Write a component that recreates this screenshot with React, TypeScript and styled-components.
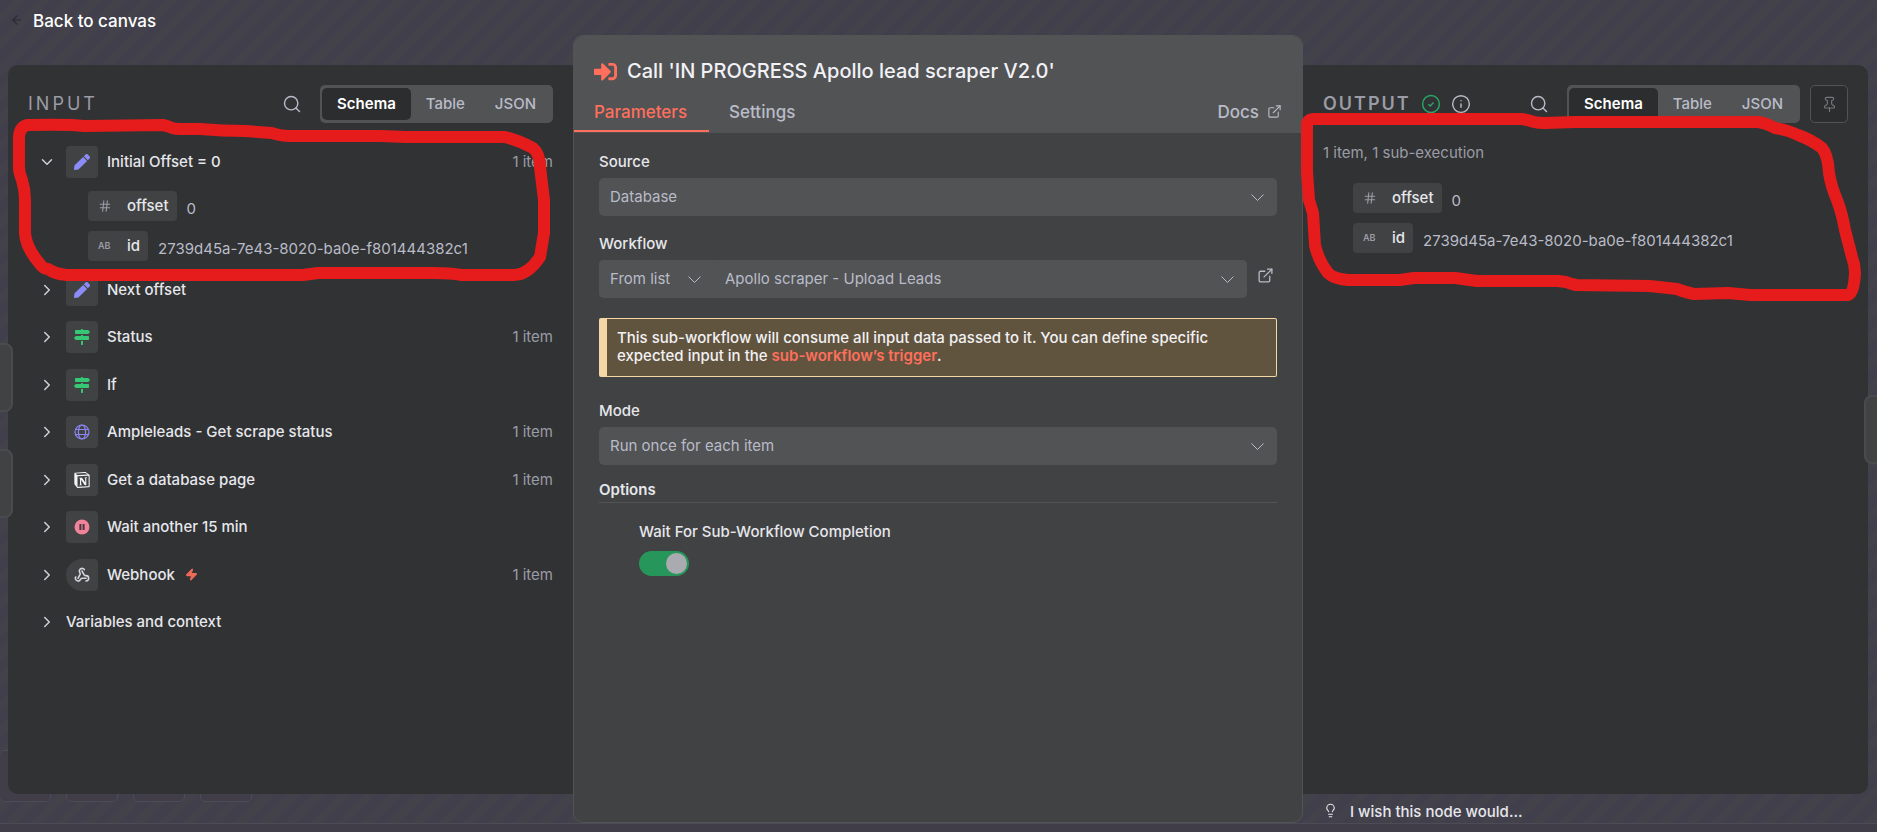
import React from "react";
import styled, { createGlobalStyle, css } from "styled-components";
import { ArrowLeft, ChevronDown, ChevronRight, ExternalLink, Hash, Info, Lightbulb, Pin, Search, Webhook, Zap } from "lucide-react";
import { FaPen, FaMapSigns, FaSignInAlt } from "react-icons/fa";
import { SiNotion } from "react-icons/si";

const color = {
  panel: "#313233",
  surface: "#414243",
  raised: "#525355",
  sunken: "#2c2d2e",
  text: "#e6e7ec",
  soft: "#b9bcc8",
  muted: "#9a9ca6",
  accent: "#ff6f5c",
  green: "#27965a",
  mark: "#e61c1c",
};

const GlobalStyle = createGlobalStyle`
  *, *::before, *::after { box-sizing: border-box; }
  body {
    margin: 0;
    background: #403e49;
    color: ${color.text};
    font-family: Inter, "Liberation Sans", sans-serif;
    font-size: 15px;
    line-height: 18px;
  }
  button, select, input { font: inherit; color: inherit; margin: 0; }
  button { background: none; border: 0; padding: 0; cursor: pointer; }
  svg { display: block; flex: none; }
`;

const Page = styled.div`
  position: relative;
  min-height: 100vh;
  display: flex;
  flex-direction: column;
  overflow: hidden;
  background: repeating-linear-gradient(135deg, #423f4c 0 9px, #434149 9px 18px);
`;

const TopBar = styled.header`
  height: 35px;
  padding: 8px 10px 0;
  display: flex;
  align-items: center;
`;

const BackLink = styled.a`
  display: flex;
  align-items: center;
  gap: 9px;
  color: #ffffff;
  font-size: 17px;
  line-height: 27px;
  font-weight: 500;
  text-decoration: none;
  svg { color: #2b2a30; margin-bottom: 4px; }
`;

const Editor = styled.main`
  position: relative;
  flex: 1;
  display: grid;
  grid-template-columns: 565fr 730fr 565fr;
  padding: 0 9px 0 8px;
`;

const StatusStrip = styled.footer`
  height: 9px;
  border-top: 1px solid #4d4b56;
  background: #403d48;
`;

const Side = styled.div`
  position: relative;
  min-width: 0;
  display: flex;
  flex-direction: column;
  padding-top: 30px;
`;

const Panel = styled.section<{ $side: "left" | "right" }>`
  position: relative;
  flex: 1;
  background: ${color.panel};
  border-radius: ${(p) => (p.$side === "left" ? "10px 0 0 10px" : "0 10px 10px 0")};
  padding: 20px 20px 0;
`;

const BelowPanel = styled.div`
  height: 29px;
  padding: 7px 20px 0;
`;

const Wish = styled.a`
  display: flex;
  align-items: center;
  gap: 12px;
  color: ${color.text};
  font-weight: 500;
  line-height: 22px;
  text-decoration: none;
  svg { margin-bottom: 4px; }
`;

const PanelHeader = styled.div`
  display: flex;
  align-items: center;
  height: 38px;
`;

const PanelTitle = styled.h2<{ $strong?: boolean }>`
  margin: 0;
  font-size: 18px;
  line-height: 38px;
  font-weight: ${(p) => (p.$strong ? 600 : 400)};
  letter-spacing: ${(p) => (p.$strong ? 2 : 3)}px;
  color: ${color.muted};
`;

const Badges = styled.div`
  display: flex;
  align-items: center;
  gap: 10px;
  margin-left: 10px;
  color: ${color.soft};
`;

const SearchButton = styled.button`
  margin: 0 18px 0 auto;
  color: ${color.soft};
`;

const ViewTabs = styled.div`
  display: flex;
  height: 38px;
  padding: 3px 2px;
  border-radius: 5px;
  background: ${color.raised};
`;

const ViewTab = styled.button<{ $active?: boolean }>`
  padding: 0 15px;
  border-radius: 5px;
  font-weight: 500;
  color: ${color.soft};
  ${(p) => p.$active && css`
    background: ${color.sunken};
    color: #ffffff;
    font-weight: 600;
  `}
`;

const PinButton = styled.button`
  width: 38px;
  height: 38px;
  margin-left: 10px;
  display: grid;
  place-items: center;
  border: 1px solid ${color.raised};
  border-radius: 5px;
  background: ${color.sunken};
  color: #77787b;
`;

const NodeRow = styled.button`
  width: 100%;
  min-height: 32px;
  padding-left: 10px;
  display: flex;
  align-items: center;
  font-weight: 500;
  text-align: left;
  > svg { color: #cfd1da; }
`;

const NodeIcon = styled.span<{ $round?: boolean }>`
  width: 32px;
  height: 32px;
  margin: 0 9px 0 10px;
  display: grid;
  place-items: center;
  border-radius: ${(p) => (p.$round ? "16px 4px 4px 16px" : "4px")};
  background: ${color.surface};
`;

const NodeName = styled.span<{ $bare?: boolean }>`
  display: flex;
  align-items: center;
  gap: 10px;
  margin-left: ${(p) => (p.$bare ? 10 : 0)}px;
`;

const ItemCount = styled.span`
  margin-left: auto;
  font-weight: 400;
  color: ${color.muted};
`;

const OpenNode = styled.div`
  padding-top: 23px;
`;

const Fields = styled.dl<{ $top: number; $left: number }>`
  margin: ${(p) => p.$top}px 0 0 ${(p) => p.$left}px;
  display: grid;
  gap: 10px;
`;

const Field = styled.div`
  display: flex;
  align-items: center;
`;

const FieldName = styled.dt`
  height: 30px;
  padding: 0 8px 0 10px;
  display: flex;
  align-items: center;
  border-radius: 4px;
  background: ${color.surface};
  font-weight: 500;
`;

const FieldType = styled.span`
  width: 29px;
  font-size: 9px;
  font-weight: 600;
  color: ${color.muted};
`;

const FieldValue = styled.dd`
  margin: 0 0 0 10px;
  padding-top: 6px;
  color: ${color.soft};
`;

const NodeList = styled.div`
  min-height: 380px;
  margin-top: 5px;
  display: grid;
  grid-auto-rows: 1fr;
`;

const RunSummary = styled.p`
  margin: 21px 0 0;
  color: ${color.muted};
`;

const Dialog = styled.section`
  min-width: 0;
  border: 1px solid ${color.raised};
  border-radius: 10px;
  background: ${color.surface};
  overflow: hidden;
`;

const DialogHeader = styled.div`
  height: 97px;
  padding-top: 17px;
  background: ${color.raised};
  display: flex;
  flex-direction: column;
  justify-content: space-between;
`;

const DialogTitle = styled.h1`
  margin: 0;
  padding: 0 20px;
  display: flex;
  align-items: center;
  gap: 10px;
  font-size: 20px;
  line-height: 36px;
  font-weight: 500;
  color: #f1f1f6;
  svg { color: ${color.accent}; }
`;

const DialogTabs = styled.nav`
  display: flex;
  height: 41px;
  padding-right: 20px;
  font-size: 17px;
`;

const DialogTab = styled.button<{ $active?: boolean }>`
  height: 40px;
  padding: 2px 22px 0 20px;
  font-weight: 500;
  color: ${(p) => (p.$active ? color.accent : color.soft)};
  border-bottom: 2px solid ${(p) => (p.$active ? color.accent : "transparent")};
`;

const DocsLink = styled.a`
  margin-left: auto;
  display: flex;
  align-items: center;
  gap: 8px;
  height: 40px;
  font-weight: 500;
  color: ${color.soft};
  text-decoration: none;
  svg { margin-bottom: 2px; }
`;

const Form = styled.form`
  padding: 18px 25px;
`;

const Group = styled.div<{ $gap: number }>`
  margin-top: ${(p) => p.$gap}px;
`;

const Label = styled.label`
  display: block;
  line-height: 22px;
  margin-bottom: 5px;
  font-weight: 500;
`;

const SelectBox = styled.span<{ $grow?: boolean }>`
  display: grid;
  align-items: center;
  flex: ${(p) => (p.$grow ? "1" : "none")};
  select, svg { grid-area: 1 / 1; }
  svg {
    justify-self: end;
    margin-right: 12px;
    color: ${color.soft};
    pointer-events: none;
  }
`;

const Select = styled.select`
  appearance: none;
  width: 100%;
  height: 38px;
  padding: 0 43px 0 11px;
  border: 0;
  border-radius: 5px;
  background: ${color.raised};
  color: ${color.soft};
`;

const LocatorRow = styled.div`
  display: flex;
  align-items: center;
  gap: 10px;
  a { color: ${color.soft}; padding: 0 3px 8px 0; }
`;

const Locator = styled.div`
  flex: 1;
  display: flex;
  border-radius: 5px;
  background: ${color.raised};
`;

const Notice = styled.p`
  margin: 20px 0 0;
  min-height: 59px;
  padding: 10px 60px 10px 10px;
  border: 1px solid #f5d7a5;
  border-left-width: 8px;
  border-radius: 2px;
  background: #61543f;
  color: #f1f1f3;
  font-weight: 500;
  a { color: ${color.accent}; font-weight: 600; text-decoration: none; }
`;

const OptionsTitle = styled.h3`
  margin: 14px 0 0;
  padding-bottom: 1px;
  border-bottom: 1px solid ${color.raised};
  font-size: 15px;
  line-height: 22px;
  font-weight: 600;
`;

const Option = styled.div`
  margin: 18px 0 0 40px;
`;

const Toggle = styled.input`
  appearance: none;
  display: block;
  width: 50px;
  height: 25px;
  border-radius: 13px;
  background: ${color.green};
  padding: 2px;
  cursor: pointer;
  ${Option} & { margin-top: 8px; }
  &::before {
    content: "";
    display: block;
    width: 21px;
    height: 21px;
    margin-left: auto;
    border-radius: 50%;
    background: #aaabb1;
  }
`;

const EdgeNode = styled.button<{ $side: "left" | "right"; $top: number }>`
  position: absolute;
  z-index: 1;
  top: ${(p) => p.$top}px;
  ${(p) => p.$side}: -56px;
  width: 69px;
  height: 69px;
  border: 2px solid #4a4b4d;
  border-radius: 8px;
  background: ${color.surface};
`;

const CanvasControls = styled.div`
  position: absolute;
  left: -1px;
  bottom: 30px;
  display: flex;
  gap: 15px;
`;

const CanvasControl = styled.button`
  width: 52px;
  height: 52px;
  border: 1px solid #4d4b58;
  border-radius: 5px;
  background: #413e4a;
`;

const Marker = styled.svg`
  position: absolute;
  z-index: 2;
  top: 0;
  left: 0;
  overflow: visible;
  pointer-events: none;
  fill: none;
  stroke: ${color.mark};
  stroke-width: 12px;
  stroke-linejoin: round;
`;

const ThinDown = () => (
  <svg width="15" height="15" viewBox="0 0 15 15" fill="none" stroke="currentColor" aria-hidden="true">
    <path d="M1.5 4.5 7.5 10.5 13.5 4.5" />
  </svg>
);

const GlobeIcon = () => (
  <svg width="16" height="16" viewBox="0 0 16 16" fill="none" stroke="#8b86f2" strokeWidth="1.2" aria-hidden="true">
    <circle cx="8" cy="8" r="7" />
    <ellipse cx="8" cy="8" rx="3.6" ry="7" />
    <path d="M1.5 5.5h13M1.5 10.5h13" />
  </svg>
);

const PauseIcon = () => (
  <svg width="16" height="16" viewBox="0 0 16 16" aria-hidden="true">
    <circle cx="8" cy="8" r="7.5" fill="#f0839a" />
    <path d="M5.4 5h2v6h-2zM8.6 5h2v6h-2z" fill="#45383e" />
  </svg>
);

const SuccessIcon = () => (
  <svg width="20" height="20" viewBox="0 0 20 20" fill="none" stroke="#29a568" strokeWidth="1.5" role="img" aria-label="Success">
    <circle cx="10" cy="10" r="8.4" />
    <path d="M7.3 10.2 9.2 12l3.4-3.6" />
  </svg>
);

type NodeInfo = { name: string; icon?: React.ReactNode; count?: boolean; trigger?: boolean };

const pen = <FaPen size={16} color="#8b8cf8" />;
const signs = <FaMapSigns size={16} color="#35c773" />;

const nodes: NodeInfo[] = [
  { name: "Next offset", icon: pen },
  { name: "Status", icon: signs, count: true },
  { name: "If", icon: signs },
  { name: "Ampleleads - Get scrape status", icon: <GlobeIcon />, count: true },
  { name: "Get a database page", icon: <SiNotion size={16} color="#f4f4f4" />, count: true },
  { name: "Wait another 15 min", icon: <PauseIcon /> },
  { name: "Webhook", icon: <Webhook size={16} strokeWidth={2.4} color="#d5d6dd" />, count: true, trigger: true },
  { name: "Variables and context" },
];

function Views() {
  return (
    <ViewTabs role="tablist">
      <ViewTab role="tab" aria-selected $active>Schema</ViewTab>
      <ViewTab role="tab">Table</ViewTab>
      <ViewTab role="tab">JSON</ViewTab>
    </ViewTabs>
  );
}

function SearchControl() {
  return (
    <SearchButton aria-label="Search">
      <Search size={20} strokeWidth={1.7} />
    </SearchButton>
  );
}

function SchemaFields({ top, left }: { top: number; left: number }) {
  return (
    <Fields $top={top} $left={left}>
      <Field>
        <FieldName><FieldType><Hash size={14} strokeWidth={1.9} /></FieldType>offset</FieldName>
        <FieldValue>0</FieldValue>
      </Field>
      <Field>
        <FieldName><FieldType>AB</FieldType>id</FieldName>
        <FieldValue>2739d45a-7e43-8020-ba0e-f801444382c1</FieldValue>
      </Field>
    </Fields>
  );
}

export default function App() {
  return (
    <Page>
      <GlobalStyle />
      <CanvasControls>
        {["Fit view", "Zoom in", "Zoom out", "Tidy up"].map((n) => <CanvasControl key={n} aria-label={n} />)}
      </CanvasControls>
      <TopBar>
        <BackLink href="#canvas"><ArrowLeft size={14} strokeWidth={2} />Back to canvas</BackLink>
      </TopBar>
      <Editor>
        <Side>
          <Panel $side="left">
            <PanelHeader>
              <PanelTitle>INPUT</PanelTitle>
              <SearchControl />
              <Views />
            </PanelHeader>
            <OpenNode>
              <NodeRow aria-expanded>
                <ChevronDown size={18} />
                <NodeIcon>{pen}</NodeIcon>
                <NodeName>Initial Offset = 0</NodeName>
                <ItemCount>1 item</ItemCount>
              </NodeRow>
              <SchemaFields top={13} left={60} />
            </OpenNode>
            <NodeList>
              {nodes.map((n) => (
                <NodeRow key={n.name}>
                  <ChevronRight size={18} />
                  {n.icon && <NodeIcon $round={n.trigger}>{n.icon}</NodeIcon>}
                  <NodeName $bare={!n.icon}>
                    {n.name}
                    {n.trigger && <Zap size={13} color="#ee6a58" fill="#ee6a58" />}
                  </NodeName>
                  {n.count && <ItemCount>1 item</ItemCount>}
                </NodeRow>
              ))}
            </NodeList>
            <Marker width="565" height="260" viewBox="8 65 565 260" aria-hidden="true">
              <path d="M28 125Q70 124 84 126L163 125Q168 126 172 128Q176 129 180 129L200 129Q222 131 245 131L272 133Q280 136 290 136L380 136L407 137L505 137Q520 141 533 148Q540 154 540 167L544 200L544 233L540 257Q528 275 514 275L462 275Q450 273 435 273L318 273L303 275L67 275Q55 274 48 269Q43 269 40 264Q26 248 25 233L25 200Q25 190 22 180Q19 173 19 167L19 137Q20 126 28 125Z" />
            </Marker>
          </Panel>
          <BelowPanel />
        </Side>

        <Dialog>
          <DialogHeader>
            <DialogTitle><FaSignInAlt size={23} />Call 'IN PROGRESS Apollo lead scraper V2.0'</DialogTitle>
            <DialogTabs>
              <DialogTab $active>Parameters</DialogTab>
              <DialogTab>Settings</DialogTab>
              <DocsLink href="#docs">Docs<ExternalLink size={15} strokeWidth={1.8} /></DocsLink>
            </DialogTabs>
          </DialogHeader>
          <Form>
            <Group $gap={0}>
              <Label htmlFor="source">Source</Label>
              <SelectBox>
                <Select id="source"><option>Database</option></Select>
                <ThinDown />
              </SelectBox>
            </Group>
            <Group $gap={17}>
              <Label htmlFor="workflow">Workflow</Label>
              <LocatorRow>
                <Locator>
                  <SelectBox>
                    <Select aria-label="Selection mode"><option>From list</option></Select>
                    <ThinDown />
                  </SelectBox>
                  <SelectBox $grow>
                    <Select id="workflow"><option>Apollo scraper - Upload Leads</option></Select>
                    <ThinDown />
                  </SelectBox>
                </Locator>
                <a href="#workflow" aria-label="Open workflow"><ExternalLink size={17} strokeWidth={1.8} /></a>
              </LocatorRow>
            </Group>
            <Notice>
              This sub-workflow will consume all input data passed to it. You can define specific expected input in the <a href="#trigger">sub-workflow’s trigger</a>.
            </Notice>
            <Group $gap={23}>
              <Label htmlFor="mode">Mode</Label>
              <SelectBox>
                <Select id="mode"><option>Run once for each item</option></Select>
                <ThinDown />
              </SelectBox>
            </Group>
            <OptionsTitle>Options</OptionsTitle>
            <Option>
              <Label htmlFor="wait">Wait For Sub-Workflow Completion</Label>
              <Toggle id="wait" type="checkbox" role="switch" defaultChecked />
            </Option>
          </Form>
        </Dialog>

        <Side>
          <Panel $side="right">
            <PanelHeader>
              <PanelTitle $strong>OUTPUT</PanelTitle>
              <Badges>
                <SuccessIcon />
                <Info size={20} strokeWidth={1.7} />
              </Badges>
              <SearchControl />
              <Views />
              <PinButton aria-label="Pin data"><Pin size={17} strokeWidth={1.6} /></PinButton>
            </PanelHeader>
            <RunSummary>1 item, 1 sub-execution</RunSummary>
            <SchemaFields top={21} left={30} />
            <Marker width="565" height="260" viewBox="1303 65 565 260" aria-hidden="true">
              <path d="M1307 123Q1309 119 1314 119L1522 119Q1528 120 1534 122Q1538 123 1545 123L1575 122L1758 122Q1766 123 1775 128Q1788 130 1798 135Q1812 140 1822 148Q1828 155 1829 173Q1831 186 1837 200Q1842 213 1845 230L1852 257Q1855 265 1855 273Q1854 294 1848 295L1750 295L1728 293L1694 294Q1688 293 1677 289L1659 287L1649 286L1576 285Q1571 284 1566 282L1558 281L1477 281L1455 278L1414 278L1400 280L1348 280Q1334 279 1328 273Q1318 260 1315 245L1313 213L1309 200L1307 172Z" />
            </Marker>
          </Panel>
          <BelowPanel>
            <Wish href="#wish"><Lightbulb size={15} strokeWidth={1.8} />I wish this node would...</Wish>
          </BelowPanel>
        </Side>
        <EdgeNode $side="left" $top={308} aria-label="Previous node" />
        <EdgeNode $side="left" $top={414} aria-label="Other previous node" />
        <EdgeNode $side="right" $top={360} aria-label="Next node" />
      </Editor>
      <StatusStrip />
    </Page>
  );
}
